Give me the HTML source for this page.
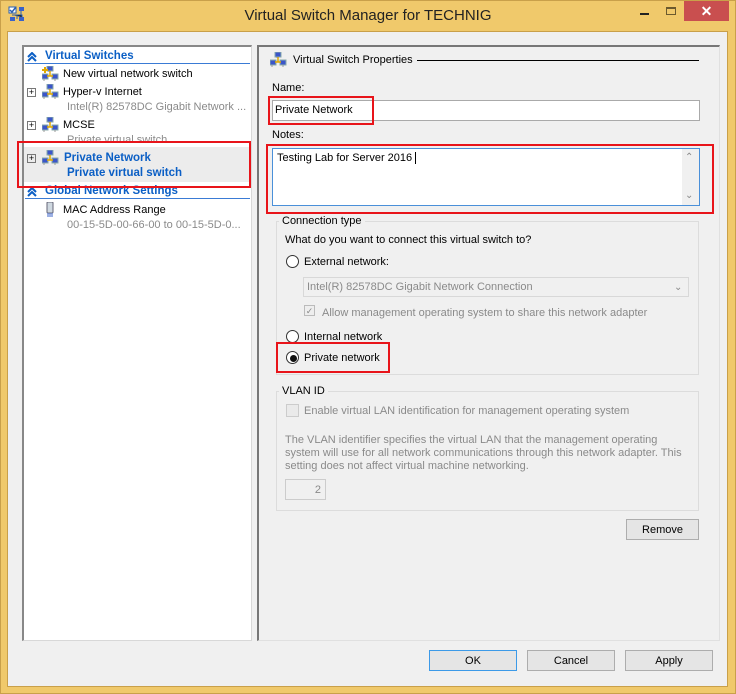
<!DOCTYPE html>
<html><head><meta charset="utf-8"><style>
*{margin:0;padding:0;box-sizing:border-box}
body{width:736px;height:694px;background:#f0c96b;font-family:"Liberation Sans",sans-serif;font-size:11px;line-height:15px;color:#000;position:relative;overflow:hidden}
.a{position:absolute;white-space:nowrap}
#frame{position:absolute;left:0;top:0;width:736px;height:694px;border:1px solid #c9a04a}
#client{position:absolute;left:7px;top:31px;width:721px;height:656px;background:#f0f0f0;border:1px solid #c9a04a}
.btn{position:absolute;background:#e5e5e5;border:1px solid #adadad;text-align:center;line-height:20px;font-size:11px}
.red{position:absolute;border:2px solid #e8141a}
.gray{color:#8a8a8a}
.radio{position:absolute;width:13px;height:13px;border:1px solid #333;border-radius:50%;background:#fff}
.grp{position:absolute;border:1px solid #dcdcdc}
.blue{color:#0b5fc5}
.chev{position:absolute;width:10px;height:10px}
</style></head><body>
<div id="frame"></div>
<svg class="a" style="left:8px;top:6px" width="18" height="18" viewBox="0 0 18 18"><rect x="1" y="1" width="7" height="6" fill="#fff" stroke="#2a5fb0"/><path d="M2 4l2 2 4-5" stroke="#2a5fb0" fill="none" stroke-width="1.5"/><rect x="11" y="1" width="5" height="4" fill="#3a62c8"/><rect x="2" y="11" width="5" height="4" fill="#3a62c8"/><rect x="11" y="11" width="5" height="4" fill="#3a62c8"/><path d="M13 5v4M4 9h10v2M9 9v4" stroke="#2a5fb0"/></svg>
<div class="a" style="left:0;width:736px;top:7px;text-align:center;font-size:15px;line-height:18px;color:#222">Virtual Switch Manager for TECHNIG</div>
<div class="a" style="left:640px;top:13px;width:9px;height:2px;background:#222"></div>
<div class="a" style="left:666px;top:7px;width:10px;height:8px;border:1px solid #6b5a2e;border-top-width:2px"></div>
<div class="a" style="left:684px;top:1px;width:45px;height:20px;background:#c94f4f"></div>
<div class="a" style="left:684px;top:1px;width:45px;height:20px;color:#fff;text-align:center;font-size:14px;font-weight:bold;line-height:20px">✕</div>
<div id="client"></div>

<!-- left panel -->
<div class="a" style="left:22px;top:45px;width:230px;height:596px;background:#fff;border:1px solid #d8d8d8;border-left:2px solid #888;border-top:2px solid #888"></div>
<svg class="chev" style="left:27px;top:52px" viewBox="0 0 10 10"><path d="M1 5l4-4 4 4M1 9l4-4 4 4" stroke="#0b5fc5" stroke-width="2" fill="none"/></svg>
<div class="a blue" style="left:45px;top:49px;font-weight:bold;font-size:11.5px">Virtual Switches</div>
<div class="a" style="left:25px;top:63px;width:225px;height:1px;background:#3a7bd5"></div>
<svg width="0" height="0" style="position:absolute"><defs><g id="net"><rect x="5" y="0" width="6" height="5" fill="#3b55c9" stroke="#8aa"/><rect x="0" y="8" width="6" height="5" fill="#3b55c9" stroke="#8aa"/><rect x="10" y="8" width="6" height="5" fill="#3b55c9" stroke="#8aa"/><path d="M8 5v5M5 10h6" stroke="#e0a800" stroke-width="1.5"/><path d="M2 13v2M13 13v2M7 5v1" stroke="#999"/></g></defs></svg>
<svg class="a" style="left:42px;top:66px" width="17" height="16"><use href="#net"/><path d="M3 1v6M0 4h6" stroke="#e0a800" stroke-width="2"/></svg>
<div class="a" style="left:63px;top:67px">New virtual network switch</div>
<div class="a" style="left:27px;top:88px;width:9px;height:9px;border:1px solid #777;font-size:9px;line-height:7px;text-align:center">+</div>
<svg class="a" style="left:42px;top:84px" width="17" height="16"><use href="#net"/></svg>
<div class="a" style="left:63px;top:85px">Hyper-v Internet</div>
<div class="a gray" style="left:67px;top:100px">Intel(R) 82578DC Gigabit Network ...</div>
<div class="a" style="left:27px;top:121px;width:9px;height:9px;border:1px solid #777;font-size:9px;line-height:7px;text-align:center">+</div>
<svg class="a" style="left:42px;top:117px" width="17" height="16"><use href="#net"/></svg>
<div class="a" style="left:63px;top:118px">MCSE</div>
<div class="a gray" style="left:67px;top:133px">Private virtual switch</div>
<div class="a" style="left:24px;top:147px;width:226px;height:35px;background:#ececec"></div>
<div class="a" style="left:27px;top:154px;width:9px;height:9px;border:1px solid #777;font-size:9px;line-height:7px;text-align:center">+</div>
<svg class="a" style="left:42px;top:150px" width="17" height="16"><use href="#net"/></svg>
<div class="a blue" style="left:64px;top:151px;font-weight:bold;font-size:11.5px">Private Network</div>
<div class="a blue" style="left:67px;top:166px;font-weight:bold;font-size:11.5px">Private virtual switch</div>
<svg class="chev" style="left:27px;top:187px" viewBox="0 0 10 10"><path d="M1 5l4-4 4 4M1 9l4-4 4 4" stroke="#0b5fc5" stroke-width="2" fill="none"/></svg>
<div class="a blue" style="left:45px;top:184px;font-weight:bold;font-size:11.5px">Global Network Settings</div>
<div class="a" style="left:25px;top:198px;width:225px;height:1px;background:#3a7bd5"></div>
<svg class="a" style="left:45px;top:202px" width="10" height="16"><rect x="2" y="0" width="6" height="11" rx="1" fill="#cfd8e0" stroke="#667"/><path d="M3 11v4M5 11v4M7 11v4" stroke="#3a62c8"/></svg>
<div class="a" style="left:63px;top:203px">MAC Address Range</div>
<div class="a gray" style="left:67px;top:218px">00-15-5D-00-66-00 to 00-15-5D-0...</div>
<div class="red" style="left:17px;top:141px;width:234px;height:47px"></div>

<!-- right panel -->
<div class="a" style="left:257px;top:45px;width:463px;height:596px;border:1px solid #e0e0e0;border-left:2px solid #777;border-top:2px solid #777"></div>
<svg class="a" style="left:270px;top:52px" width="17" height="16"><use href="#net"/></svg>
<div class="a" style="left:293px;top:53px">Virtual Switch Properties</div>
<div class="a" style="left:417px;top:60px;width:282px;height:1px;background:#000"></div>
<div class="a" style="left:272px;top:81px">Name:</div>
<div class="a" style="left:272px;top:100px;width:428px;height:21px;background:#fff;border:1px solid #aaa"></div>
<div class="a" style="left:275px;top:103px">Private Network</div>
<div class="red" style="left:268px;top:96px;width:106px;height:29px"></div>
<div class="a" style="left:272px;top:128px">Notes:</div>
<div class="a" style="left:272px;top:148px;width:428px;height:58px;background:#fff;border:1px solid #4a90d9"></div>
<div class="a" style="left:682px;top:149px;width:17px;height:56px;background:#f0f0f0"></div>
<div class="a gray" style="left:685px;top:150px;font-size:10px">&#8963;</div>
<div class="a gray" style="left:685px;top:188px;font-size:10px">&#8964;</div>
<div class="a" style="left:277px;top:151px">Testing Lab for Server 2016 <span style="border-left:1px solid #000">&nbsp;</span></div>
<div class="red" style="left:266px;top:144px;width:448px;height:70px"></div>

<div class="grp" style="left:276px;top:221px;width:423px;height:154px"></div>
<div class="a" style="left:279px;top:214px;background:#f0f0f0;padding:0 3px">Connection type</div>
<div class="a" style="left:285px;top:233px">What do you want to connect this virtual switch to?</div>
<div class="radio" style="left:286px;top:255px"></div>
<div class="a" style="left:304px;top:255px">External network:</div>
<div class="a gray" style="left:303px;top:277px;width:386px;height:20px;border:1px solid #d8d8d8;background:#f0f0f0;padding:2px 0 0 3px">Intel(R) 82578DC Gigabit Network Connection</div>
<div class="a gray" style="left:674px;top:280px;font-size:10px">&#8964;</div>
<div class="a" style="left:304px;top:305px;width:11px;height:11px;border:1px solid #bbb;background:#eee;font-size:9px;line-height:10px;text-align:center;color:#888">✓</div>
<div class="a gray" style="left:322px;top:306px">Allow management operating system to share this network adapter</div>
<div class="radio" style="left:286px;top:330px"></div>
<div class="a" style="left:304px;top:330px">Internal network</div>
<div class="radio" style="left:286px;top:351px"></div>
<div class="a" style="left:290px;top:355px;width:7px;height:7px;border-radius:50%;background:#111"></div>
<div class="a" style="left:304px;top:351px">Private network</div>
<div class="red" style="left:276px;top:342px;width:114px;height:31px"></div>

<div class="grp" style="left:276px;top:391px;width:423px;height:120px"></div>
<div class="a" style="left:279px;top:384px;background:#f0f0f0;padding:0 3px">VLAN ID</div>
<div class="a" style="left:286px;top:404px;width:13px;height:13px;border:1px solid #ccc;background:#eaeaea"></div>
<div class="a gray" style="left:304px;top:404px">Enable virtual LAN identification for management operating system</div>
<div class="a gray" style="left:285px;top:434px;line-height:13px">The VLAN identifier specifies the virtual LAN that the management operating<br>system will use for all network communications through this network adapter. This<br>setting does not affect virtual machine networking.</div>
<div class="a gray" style="left:285px;top:479px;width:41px;height:21px;border:1px solid #ccc;text-align:right;padding:3px 4px 0 0">2</div>

<div class="btn" style="left:626px;top:519px;width:73px;height:21px">Remove</div>
<div class="btn" style="left:429px;top:650px;width:88px;height:21px;border-color:#3c9ae8">OK</div>
<div class="btn" style="left:527px;top:650px;width:88px;height:21px">Cancel</div>
<div class="btn" style="left:625px;top:650px;width:88px;height:21px">Apply</div>
</body></html>
